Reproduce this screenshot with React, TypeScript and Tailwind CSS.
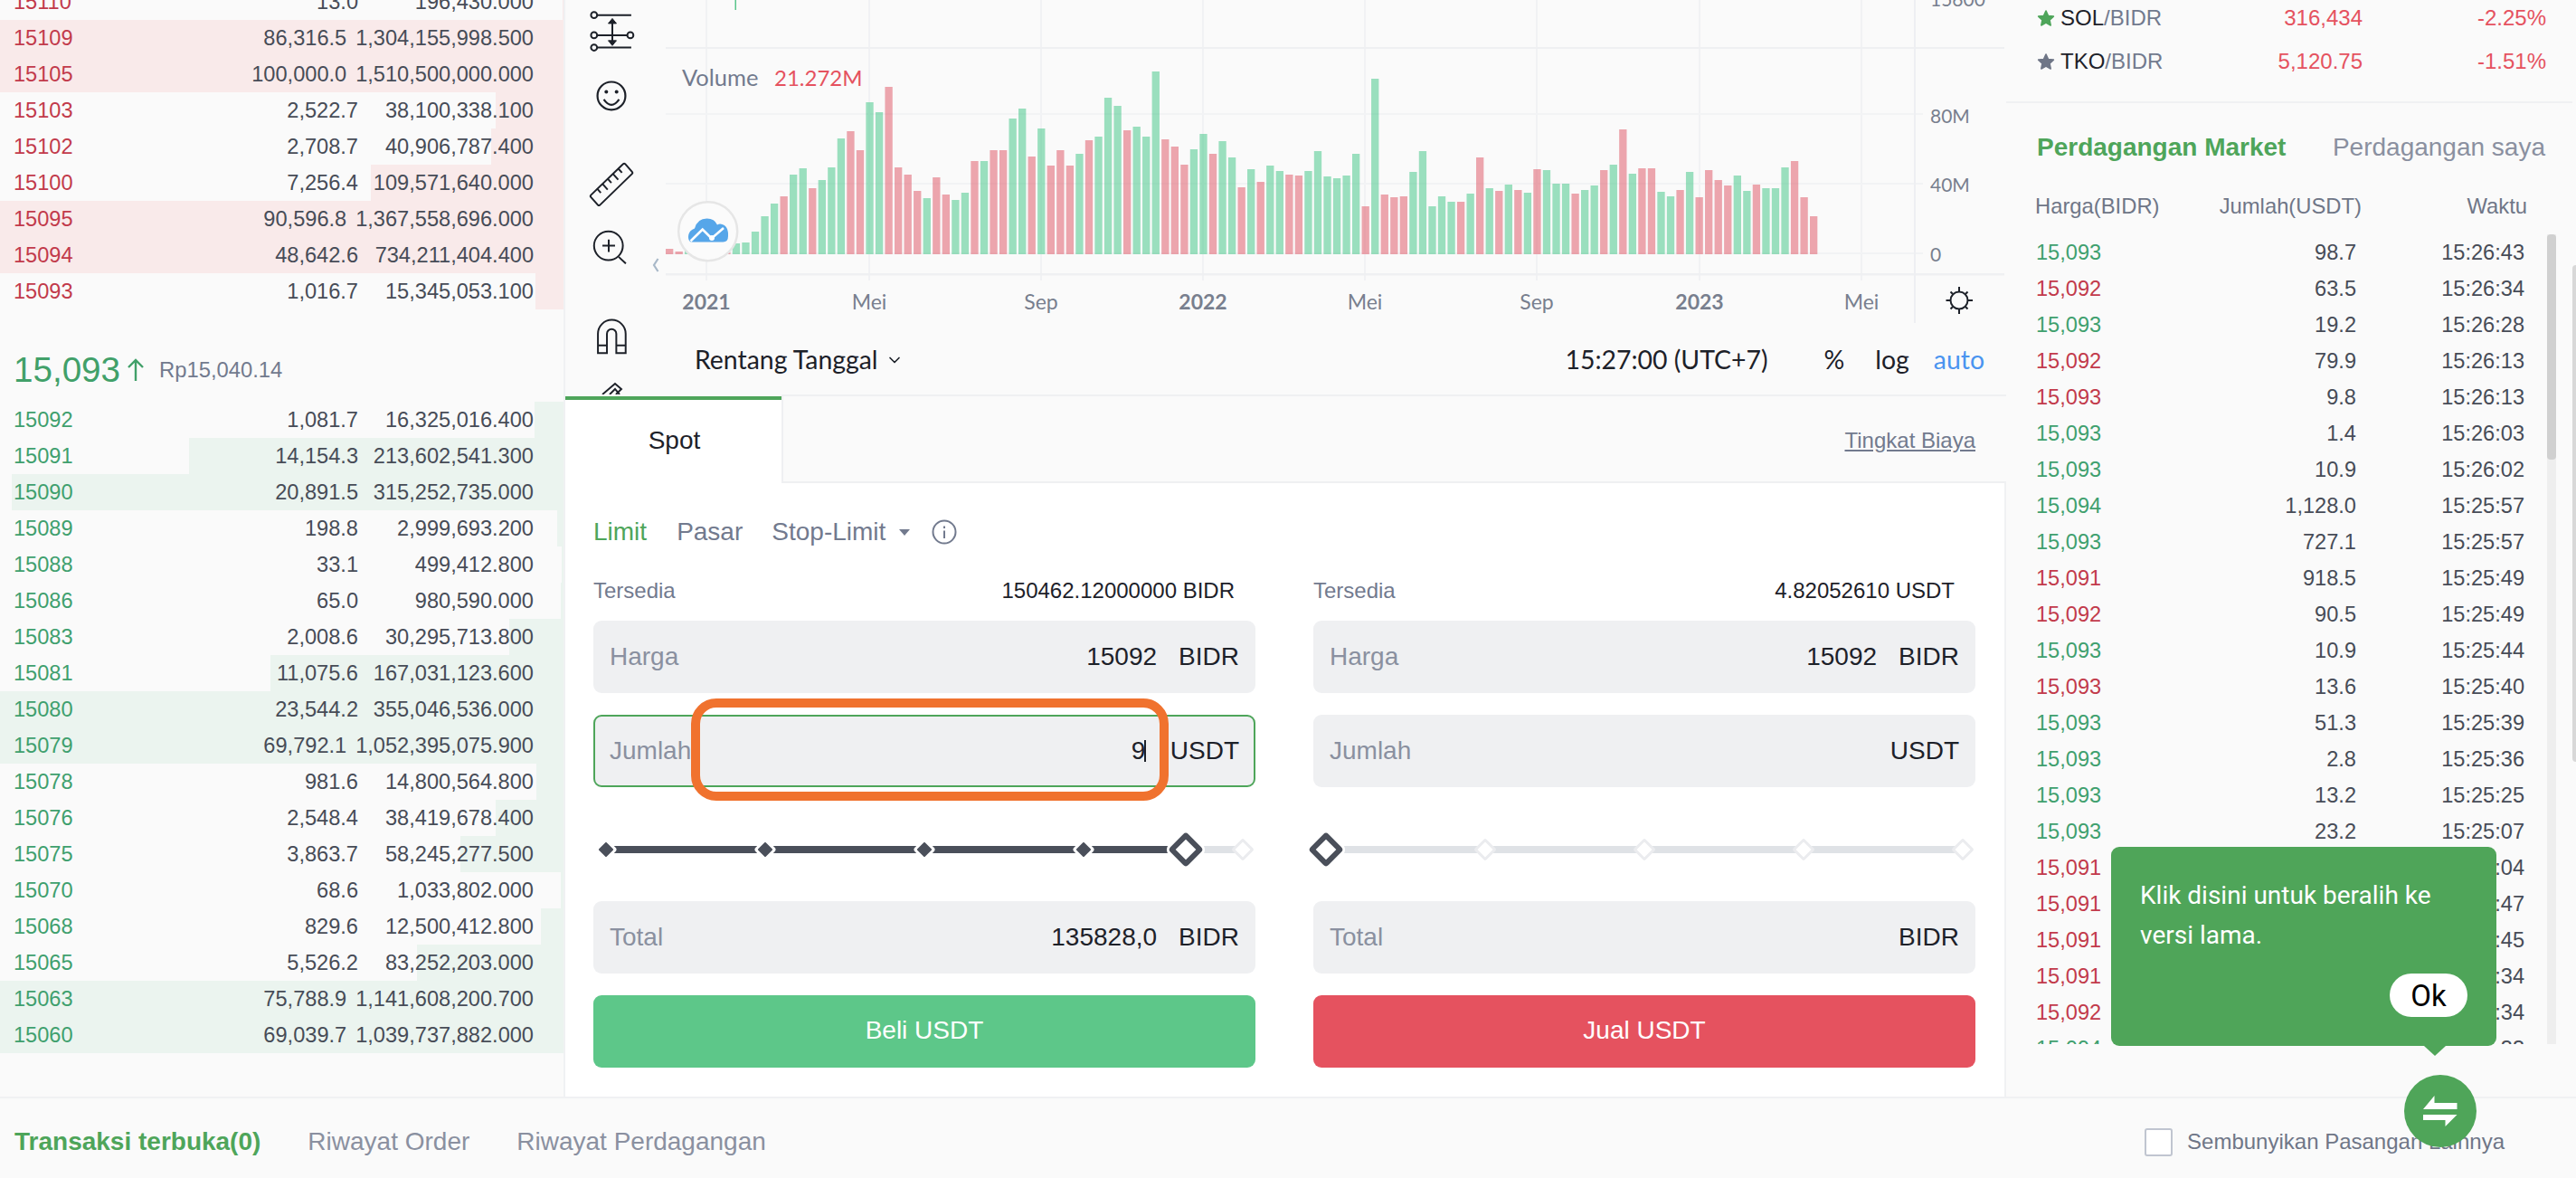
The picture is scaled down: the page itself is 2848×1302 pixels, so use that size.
import { ChevronDown } from "lucide-react";

type BookRow = [string, string, string, number];

// last value = left edge of the depth bar in px
const asks: BookRow[] = [
  ["15110", "13.0", "196,430.000", 622],
  ["15109", "86,316.5", "1,304,155,998.500", 0],
  ["15105", "100,000.0", "1,510,500,000.000", 0],
  ["15103", "2,522.7", "38,100,338.100", 548],
  ["15102", "2,708.7", "40,906,787.400", 543],
  ["15100", "7,256.4", "109,571,640.000", 410],
  ["15095", "90,596.8", "1,367,558,696.000", 0],
  ["15094", "48,642.6", "734,211,404.400", 0],
  ["15093", "1,016.7", "15,345,053.100", 592],
];

const bids: BookRow[] = [
  ["15092", "1,081.7", "16,325,016.400", 591],
  ["15091", "14,154.3", "213,602,541.300", 209],
  ["15090", "20,891.5", "315,252,735.000", 13],
  ["15089", "198.8", "2,999,693.200", 616],
  ["15088", "33.1", "499,412.800", 621],
  ["15086", "65.0", "980,590.000", 620],
  ["15083", "2,008.6", "30,295,713.800", 563],
  ["15081", "11,075.6", "167,031,123.600", 299],
  ["15080", "23,544.2", "355,046,536.000", 0],
  ["15079", "69,792.1", "1,052,395,075.900", 0],
  ["15078", "981.6", "14,800,564.800", 593],
  ["15076", "2,548.4", "38,419,678.400", 548],
  ["15075", "3,863.7", "58,245,277.500", 509],
  ["15070", "68.6", "1,033,802.000", 620],
  ["15068", "829.6", "12,500,412.800", 598],
  ["15065", "5,526.2", "83,252,203.000", 461],
  ["15063", "75,788.9", "1,141,608,200.700", 0],
  ["15060", "69,039.7", "1,039,737,882.000", 0],
];

const trades: [string, boolean, string, string][] = [
  ["15,093", true, "98.7", "15:26:43"],
  ["15,092", false, "63.5", "15:26:34"],
  ["15,093", true, "19.2", "15:26:28"],
  ["15,092", false, "79.9", "15:26:13"],
  ["15,093", false, "9.8", "15:26:13"],
  ["15,093", true, "1.4", "15:26:03"],
  ["15,093", true, "10.9", "15:26:02"],
  ["15,094", true, "1,128.0", "15:25:57"],
  ["15,093", true, "727.1", "15:25:57"],
  ["15,091", false, "918.5", "15:25:49"],
  ["15,092", false, "90.5", "15:25:49"],
  ["15,093", true, "10.9", "15:25:44"],
  ["15,093", false, "13.6", "15:25:40"],
  ["15,093", true, "51.3", "15:25:39"],
  ["15,093", true, "2.8", "15:25:36"],
  ["15,093", true, "13.2", "15:25:25"],
  ["15,093", true, "23.2", "15:25:07"],
  ["15,091", false, "40.6", "15:25:04"],
  ["15,091", false, "12.4", "15:24:47"],
  ["15,091", false, "8.1", "15:24:45"],
  ["15,091", false, "33.0", "15:24:34"],
  ["15,092", false, "5.5", "15:24:34"],
  ["15,094", true, "17.9", "15:24:33"],
];

// volume bars: top edge measured at 3x, positive = green, negative = red
const volume = [
  -825, -834, 830, 838, 838, 838, -836, 807, 804, 768, 717, 675, -651, 579, 558, -624, 597, 555, 459, -435, -498, 339,
  372, -288, -555, -579, -633, 657, -588, -645, 663, 639, -534, 534, -498, -498, 393, 360, -519, 426, -549, -498, -549,
  510, -465, 453, 324, 351, -432, 420, 453, 237, -462, -486, -546, 495, 444, -510, 468, 522, -621, 561, -603, 549, 567,
  -579, -582, 567, 501, 585, 591, 582, 510, -684, 261, -645, -654, -651, 570, 501, 684, 651, 669, -669, 642, -522, 624,
  -633, 612, -630, 639, -561, 564, 609, 609, -642, 630, 615, -564, 546, -429, 576, -558, -558, 636, 651, -630, 570,
  -654, -564, -597, -615, 582, 633, -612, 624, 624, 555, -534, -654, -717,
];
const barPitch = (2001 - 736) / (volume.length - 1);

const gridX = [781, 961, 1151, 1330, 1509, 1699, 1879, 2058];
const axisLabels = [
  { x: 781, t: "2021", bold: true },
  { x: 961, t: "Mei" },
  { x: 1151, t: "Sep" },
  { x: 1330, t: "2022", bold: true },
  { x: 1509, t: "Mei" },
  { x: 1699, t: "Sep" },
  { x: 1879, t: "2023", bold: true },
  { x: 2058, t: "Mei" },
];

const OrderBookRow = ({ row, tone }: { row: BookRow; tone: "ask" | "bid" }) => {
  const [price, amount, total, barLeft] = row;
  return (
    <div className="relative flex h-[40px] items-center pr-[33px] pt-[1px] text-[23.6px] text-[#474c57]">
      <div
        className={`absolute inset-y-0 right-0 ${tone === "ask" ? "bg-[#f9eaea]" : "bg-[#ebf4ef]"}`}
        style={{ left: barLeft }}
      />
      <span className={`relative pl-[15px] ${tone === "ask" ? "text-[#c23a4b]" : "text-[#3fa06e]"}`}>{price}</span>
      <span className="relative ml-auto whitespace-nowrap">{amount}</span>
      <span className="relative ml-[10px] min-w-[184px] whitespace-nowrap text-right">{total}</span>
    </div>
  );
};

const ChartToolbar = () => (
  <div className="relative flex h-[436px] w-[111px] shrink-0 flex-col overflow-hidden pl-[26px]">
    <svg viewBox="651 12 52 46" className="mt-[12px] h-[46px] w-[52px]" fill="none" stroke="#1d2129" strokeWidth="2">
      <path d="M660 16.7H698M660 39H693.500M660 52.700H698M677 23V48" />
      <circle cx="656.7" cy="16.7" r="3.4" />
      <circle cx="656.7" cy="39" r="3.4" />
      <circle cx="697" cy="39" r="3.4" />
      <circle cx="656.7" cy="52.7" r="3.4" />
      <path d="M672.5 26L677 20.5L681.5 26ZM672.5 45L677 50.5L681.5 45Z" fill="#1d2129" strokeWidth="1" />
    </svg>
    <svg viewBox="659 89 34 34" className="ml-[8px] mt-[31px] h-[34px] w-[34px]" fill="none" stroke="#1d2129" strokeWidth="2.2">
      <circle cx="676" cy="106" r="15.5" />
      <circle cx="670.3" cy="101.5" r="2" fill="#1d2129" stroke="none" />
      <circle cx="681.7" cy="101.5" r="2" fill="#1d2129" stroke="none" />
      <path d="M667.5 110Q676 122 684.5 110" />
    </svg>
    <svg viewBox="651 179 50 50" className="mt-[56px] h-[50px] w-[50px]" fill="none" stroke="#1d2129" strokeWidth="2">
      <path
        d="M689 181.2Q690.2 180.2 691.2 181.2L698.9 190Q699.9 191.2 698.9 192.2L663.2 226.8Q662 227.8 661 226.8L653.2 218Q652.2 216.9 653.2 215.8Z"
        strokeLinejoin="round"
      />
      <path d="M683.5 186.3L687.7 191M677.5 192L683.5 198.8M671.7 197.5L675.9 202.2M665.8 203L671.8 209.8M660 208.5L664.2 213.2" />
    </svg>
    <svg viewBox="655 255 38 38" className="ml-[4px] mt-[26px] h-[38px] w-[38px]" fill="none" stroke="#1d2129" strokeWidth="2">
      <circle cx="672.7" cy="272.7" r="16" />
      <path d="M666 272.7H680M673 265.7V279.7M684 285L692 292.5" />
    </svg>
    <svg viewBox="659 353 34 40" className="ml-[8px] mt-[60px] h-[40px] w-[34px]" fill="none" stroke="#1d2129" strokeWidth="2">
      <path d="M661 391.5V370a15.4 15.4 0 0 1 30.8 0V391.5H681.4V370a5.2 5.2 0 0 0 -10.4 0V391.5ZM661 383H671M681.4 383H691.8" />
    </svg>
    <svg viewBox="664 422 25 14" className="ml-[13px] mt-[30px] h-[14px] w-[25px]" fill="none" stroke="#1d2129" strokeWidth="2">
      <path d="M666 436L680 424L687 430L681 436M674 436L680 430L685 436" />
    </svg>
    <svg viewBox="720 284 10 18" className="absolute left-[95px] top-[284px] h-[18px] w-[10px]" fill="none" stroke="#a8b8c8" strokeWidth="2.2">
      <path d="M727.5 286L723 293L727.5 300" />
    </svg>
  </div>
);

const VolumeChart = () => (
  <svg viewBox="736 0 1480 357" className="block h-[357px] w-[1480px]">
    {gridX.map((x) => (
      <rect key={x} x={x - 1} y={0} width={2} height={310} fill="#f1f2f4" />
    ))}
    <rect x={736} y={125} width={1390} height={2} fill="#f2f3f5" />
    <rect x={736} y={202} width={1390} height={2} fill="#f2f3f5" />
    <rect x={736} y={279} width={1390} height={2} fill="#f2f3f5" />
    <rect x={736} y={52} width={1480} height={2} fill="#eff0f2" />
    <rect x={736} y={302} width={1480} height={2.5} fill="#eff0f2" />
    <rect x={2116} y={0} width={2} height={357} fill="#eeeff2" />
    <rect x={812.5} y={0} width={1.5} height={11} fill="#5ac58b" />

    {volume.map((v, i) => {
      const top = Math.abs(v) / 3;
      return (
        <rect
          key={i}
          x={736 + i * barPitch}
          y={top}
          width={8.3}
          height={281 - top}
          fill={v > 0 ? "#3ac482" : "#de5060"}
          fillOpacity={0.5}
        />
      );
    })}

    <text x={754} y={95} className="fill-[#727a8e] font-['Lato',sans-serif] text-[25.5px]">
      Volume
    </text>
    <text x={856} y={95} className="fill-[#e5525f] font-['Lato',sans-serif] text-[24px]">
      21.272M
    </text>

    {axisLabels.map((l) => (
      <text
        key={l.x}
        x={l.x}
        y={342}
        textAnchor="middle"
        className={`fill-[#787f8e] font-['Lato',sans-serif] text-[23px] ${l.bold ? "font-bold" : ""}`}
      >
        {l.t}
      </text>
    ))}
    <text x={2134} y={7} className="fill-[#787f8e] font-['Lato',sans-serif] text-[21px]">
      15600
    </text>
    <text x={2134} y={136} className="fill-[#787f8e] font-['Lato',sans-serif] text-[21px]">
      80M
    </text>
    <text x={2134} y={212} className="fill-[#787f8e] font-['Lato',sans-serif] text-[21px]">
      40M
    </text>
    <text x={2134} y={289} className="fill-[#787f8e] font-['Lato',sans-serif] text-[21px]">
      0
    </text>

    {/* logo badge */}
    <circle cx={782.7} cy={255.7} r={32.5} fill="#fbfbfb" stroke="#e6e6e6" strokeWidth={2.5} />
    <path
      d="M761 262q0-7 7-9.5q3-11 13.5-11q8.5 0 11.5 7q2.5-1.5 5.5-.5q7 2 6.5 13q0 6.500-5.500 6.500h-34q-4.500 0-4.500-5.500Z"
      fill="#56a6e9"
    />
    <path d="M763.500 266.500L776.700 253.500L786.700 263.500L800 252" fill="none" stroke="#fff" strokeWidth={2.6} />
    <circle cx={787} cy={263} r={3} fill="#fff" />

    {/* theme toggle */}
    <circle cx={2166} cy={332} r={9.5} fill="none" stroke="#1d2129" strokeWidth={2} />
    <path
      d="M2166 317V322.500M2166 341.500V347M2151.500 332H2156.500M2175.500 332H2181M2156.500 322.500L2158.800 324.800M2175.500 322.500L2173.200 324.800M2156.500 341.500L2158.800 339.200M2175.500 341.500L2173.200 339.200"
      stroke="#1d2129"
      strokeWidth={2}
      fill="none"
    />
  </svg>
);

const ChartControls = () => (
  <div className="flex h-[79px] items-center pl-[32px] pr-[22px] pt-[2px] font-['Lato',sans-serif] text-[28.4px] text-[#1d2129]">
    <span>Rentang Tanggal</span>
    <ChevronDown className="ml-[8px] h-[20px] w-[20px]" strokeWidth={2} />
    <span className="ml-auto">15:27:00 (UTC+7)</span>
    <span className="ml-[62px]">%</span>
    <span className="ml-[34px]">log</span>
    <span className="ml-[27px] text-[#4a94f0]">auto</span>
  </div>
);

const Field = ({
  label,
  value,
  unit,
  focused,
}: {
  label: string;
  value?: string;
  unit: string;
  focused?: boolean;
}) => (
  <div
    className={`relative flex h-[80px] items-center rounded-[9px] bg-[#eff0f2] text-[28px] ${
      focused ? "border-2 border-[#4ea55a] px-[16px]" : "px-[18px]"
    }`}
  >
    <span className="text-[#8a90a0]">{label}</span>
    {value && <span className="ml-auto text-[#1d2129]">{value}</span>}
    {focused && <span className="-ml-[1px] h-[24px] w-[1.5px] bg-[#1d2129]" />}
    <span className={`${value ? (focused ? "ml-[27px]" : "ml-[24px]") : "ml-auto"} text-[#1d2129]`}>{unit}</span>
  </div>
);

const Slider = ({ value }: { value: number }) => (
  <div className="relative mx-[14px] h-[40px]">
    <div className="absolute inset-x-0 top-[16px] h-[8px] bg-[#dfe2e6]" />
    <div className="absolute left-0 top-[16px] h-[8px] bg-[#4a4f5a]" style={{ width: `${value}%` }} />
    {[0, 25, 50, 75, 100].map((p) =>
      p < value ? (
        <div
          key={p}
          className="absolute top-1/2 h-[12px] w-[12px] -translate-x-1/2 -translate-y-1/2 rotate-45 rounded-[1px] bg-[#4a4f5a] ring-[3px] ring-white"
          style={{ left: `${p}%` }}
        />
      ) : (
        <div
          key={p}
          className="absolute top-1/2 h-[18px] w-[18px] -translate-x-1/2 -translate-y-1/2 rotate-45 rounded-[2px] border-[3px] border-[#ebecef] bg-white"
          style={{ left: `${p}%` }}
        />
      ),
    )}
    <div
      className="absolute top-1/2 h-[28px] w-[28px] -translate-x-1/2 -translate-y-1/2 rotate-45 rounded-[4px] border-[6px] border-[#4a4f5a] bg-white ring-[3px] ring-white"
      style={{ left: `${value}%` }}
    />
  </div>
);

const OrderForm = ({ side }: { side: "buy" | "sell" }) => {
  const buy = side === "buy";
  return (
    <div className="flex flex-col">
      <div className="mb-[19px] mt-[31px] flex h-[30px] items-center justify-between pr-[23px] pt-[1px] text-[24px]">
        <span className="text-[#727a8e]">Tersedia</span>
        <span className="text-[#1d2129]">{buy ? "150462.12000000 BIDR" : "4.82052610 USDT"}</span>
      </div>
      <Field label="Harga" value="15092" unit="BIDR" />
      <div className="relative mt-[24px]">
        <Field label="Jumlah" value={buy ? "9" : undefined} unit="USDT" focused={buy} />
        {buy && (
          <div className="absolute left-[108px] top-[-18px] h-[113px] w-[528px] rounded-[28px] border-[10px] border-[#f0722e]" />
        )}
      </div>
      <div className="mt-[49px]">
        <Slider value={buy ? 91 : 0} />
      </div>
      <div className="mt-[37px]">
        <Field label="Total" value={buy ? "135828,0" : undefined} unit="BIDR" />
      </div>
      <button
        className={`mt-[24px] h-[80px] rounded-[9px] pb-[2px] text-[28px] text-white ${
          buy ? "bg-[#5dc789]" : "bg-[#e5525f]"
        }`}
      >
        {buy ? "Beli USDT" : "Jual USDT"}
      </button>
    </div>
  );
};

const Star = ({ color }: { color: string }) => (
  <svg viewBox="0 0 24 24" className="h-[20px] w-[20px]" fill={color} stroke={color} strokeWidth="2" strokeLinejoin="round">
    <path d="M12 2.500L15 9L22 9.800L16.800 14.500L18.200 21.500L12 18L5.800 21.500L7.200 14.500L2 9.800L9 9Z" />
  </svg>
);

const FavRow = ({ base, price, pct, color }: { base: string; price: string; pct: string; color: string }) => (
  <div className="flex h-[48px] items-center pl-[34px] pr-[29px] pt-[2px] text-[24px]">
    <Star color={color} />
    <span className="ml-[6px] text-[#1d2129]">{base}</span>
    <span className="text-[#727a8e]">/BIDR</span>
    <span className="ml-auto text-[#e5525f]">{price}</span>
    <span className="w-[203px] text-right text-[#e5525f]">{pct}</span>
  </div>
);

export default function App() {
  return (
    <div className="relative flex h-[1302px] w-[2848px] flex-col overflow-hidden bg-[#fafafa] font-['Liberation_Sans',sans-serif]">
      <div className="flex h-[1212px]">
        {/* ORDER BOOK */}
        <div className="w-[625px] shrink-0 overflow-hidden border-r-2 border-[#f0f1f3]">
          <div className="-mt-[18px]">
            {asks.map((r) => (
              <OrderBookRow key={r[0]} row={r} tone="ask" />
            ))}
          </div>
          <div className="flex h-[102px] items-end pb-[15px] pl-[15px]">
            <div className="flex h-[40px] items-center">
              <span className="text-[38.6px] text-[#41a069]">15,093</span>
              <svg viewBox="0 0 20 26" className="ml-[7px] h-[26px] w-[20px]" fill="none" stroke="#41a069" strokeWidth="2.4">
                <path d="M10 25V2M2 10L10 2L18 10" />
              </svg>
              <span className="ml-[16px] text-[23.8px] text-[#727a8e]">Rp15,040.14</span>
            </div>
          </div>
          <div>
            {bids.map((r) => (
              <OrderBookRow key={r[0]} row={r} tone="bid" />
            ))}
          </div>
        </div>

        {/* CHART + FORM */}
        <div className="flex w-[1593px] shrink-0 flex-col">
          <div className="flex h-[436px] overflow-hidden">
            <ChartToolbar />
            <div className="w-[1480px]">
              <VolumeChart />
              <ChartControls />
            </div>
          </div>
          <div className="flex h-[98px]">
            <div className="mt-[2px] flex w-[239px] items-center justify-center border-t-4 border-[#4ea55a] bg-white pb-[2px] pl-[2px] text-[28px] text-[#1d2129]">
              Spot
            </div>
            <div className="flex flex-1 items-center justify-end border-b-2 border-l-2 border-t-2 border-[#eff0f2] pr-[34px] pt-[4px]">
              <span className="text-[24px] text-[#727a8e] underline">Tingkat Biaya</span>
            </div>
          </div>
          <div className="flex-1 border-r-2 border-[#f0f1f3] bg-white">
            <div className="flex h-[72px] items-end pl-[31px] text-[28px] text-[#727a8e]">
              <div className="flex h-[40px] translate-y-[2px] items-center">
                <span className="text-[#4ea55a]">Limit</span>
                <span className="ml-[33px]">Pasar</span>
                <span className="ml-[32px]">Stop-Limit</span>
                <span className="ml-[15px] h-0 w-0 border-x-[6px] border-t-[7px] border-x-transparent border-t-[#727a8e]" />
                <svg viewBox="0 0 28 28" className="ml-[24px] h-[28px] w-[28px]" fill="none" stroke="#727a8e" strokeWidth="2">
                  <circle cx="14" cy="14" r="12.500" />
                  <path d="M14 12.500V21M14 7.500V10" />
                </svg>
              </div>
            </div>
            <div className="grid grid-cols-2 gap-x-[64px] pl-[31px] pr-[32px]">
              <OrderForm side="buy" />
              <OrderForm side="sell" />
            </div>
          </div>
        </div>

        {/* MARKET TRADES */}
        <div className="relative w-[630px] shrink-0 pr-[4px]">
          <div className="h-[114px] overflow-hidden border-b-2 border-[#f0f1f3]">
            <div className="-mt-[5px]">
              <FavRow base="SOL" price="316,434" pct="-2.25%" color="#4ea55a" />
              <FavRow base="TKO" price="5,120.75" pct="-1.51%" color="#6f7687" />
            </div>
          </div>
          <div className="flex h-[94px] items-center justify-between pl-[34px] pr-[30px] pt-[4px] text-[28px]">
            <span className="font-bold text-[#4ea55a]">Perdagangan Market</span>
            <span className="text-[#8a90a0]">Perdagangan saya</span>
          </div>
          <div className="flex h-[40px] items-center pl-[32px] text-[23.8px] text-[#6f7687]">
            <span className="w-[155px]">Harga(BIDR)</span>
            <span className="w-[206px] text-right">Jumlah(USDT)</span>
            <span className="w-[183px] text-right">Waktu</span>
          </div>
          <div className="relative mt-[11px] h-[895px] overflow-hidden">
            {trades.map((t, i) => (
              <div key={i} className="flex h-[40px] items-center pl-[33px] pt-[1px] text-[23.6px] text-[#474c57]">
                <span className={`w-[154px] ${t[1] ? "text-[#3fa06e]" : "text-[#c23a4b]"}`}>{t[0]}</span>
                <span className="w-[200px] text-right">{t[2]}</span>
                <span className="w-[186px] text-right">{t[3]}</span>
              </div>
            ))}
            <div className="absolute left-[598px] top-0 h-full w-[10px] bg-[#eeeeee]">
              <div className="h-[249px] rounded-[4px] bg-[#d0d0d0]" />
            </div>
          </div>
        </div>
      </div>

      {/* BOTTOM TABS */}
      <div className="flex flex-1 items-center border-t-2 border-[#f0f1f3] pl-[16px] pt-[8px] text-[28px]">
        <span className="font-bold text-[#4ea55a]">Transaksi terbuka(0)</span>
        <span className="ml-[52px] text-[#8a90a0]">Riwayat Order</span>
        <span className="ml-[52px] text-[#8a90a0]">Riwayat Perdagangan</span>
        <span className="ml-auto h-[31px] w-[31px] rounded-[3px] border-2 border-[#c0c5d0] bg-white" />
        <span className="ml-[16px] mr-[79px] text-[24px] text-[#6f7687]">Sembunyikan Pasangan Lainnya</span>
      </div>

      {/* page scrollbar */}
      <div className="absolute right-0 top-[293px] h-[549px] w-[4px] rounded-l bg-[#d8d8d8]" />

      {/* version tooltip */}
      <div className="absolute left-[2334px] top-[936px] h-[220px] w-[426px] rounded-[9px] bg-[#4fa559] font-['Roboto',sans-serif] text-white">
        <p className="pl-[32px] pr-[60px] pt-[32px] text-[28px] leading-[44px]">Klik disini untuk beralih ke versi lama.</p>
        <button className="absolute bottom-[32px] right-[32px] h-[48px] w-[86px] rounded-full bg-white text-[33px] leading-none text-black">
          Ok
        </button>
        <div className="absolute left-[346px] top-full h-0 w-0 border-x-[12px] border-t-[11px] border-x-transparent border-t-[#4fa559]" />
      </div>
      <div className="absolute left-[2658px] top-[1188px] h-[80px] w-[80px] rounded-full bg-[#4fa559]">
        <svg viewBox="0 0 80 80" className="h-[80px] w-[80px]" fill="#fff">
          <path d="M21 38L33.500 23V31H58.500V38ZM21 44H58.500L45.500 57V50H21Z" />
        </svg>
      </div>
    </div>
  );
}
